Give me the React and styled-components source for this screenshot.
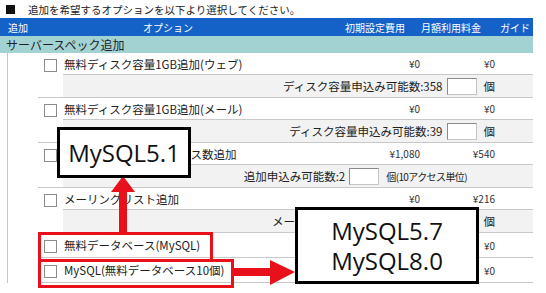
import React from 'react';
import styled, { createGlobalStyle } from 'styled-components';

const GlobalStyle = createGlobalStyle`
    body {
        margin: 0;
        background: #fff;
    }
`;

const jp = `"Noto Sans CJK JP", "Noto Sans", sans-serif`;

const Page = styled.div`
    position: relative;
    width: 546px;
    height: 293px;
    overflow: hidden;
    background: #fff;
    color: #222;
    font-family: ${ jp };
`;

const Title = styled.div`
    height: 18px;
    display: flex;
    align-items: center;
    padding-left: 6px;
    font-size: 10.5px;
    white-space: nowrap;
`;

const Square = styled.span`
    width: 9px;
    height: 9px;
    background: #111;
    margin-right: 13px;
`;

const Table = styled.div`
    width: 533px;
`;

const HeadRow = styled.div`
    display: grid;
    grid-template-columns: 143px 202px 76px 79px 1fr;
    height: 18px;
    align-items: center;
    background: #1462c8;
    color: #fff;
    font-size: 10px;
    white-space: nowrap;
    overflow: hidden;
`;

const HeadCell = styled.span`
    padding-left: ${ p => p.$pad || 0 }px;
    overflow: hidden;
`;

const Section = styled.div`
    height: 17px;
    display: flex;
    align-items: center;
    padding-left: 6px;
    background: #a2d2d2;
    font-size: 12px;
`;

const Body = styled.div`
    margin-left: 7px;
    border-left: 1px solid #c6c6c6;
    padding-left: 30px;
`;

const Block = styled.div`
    border-bottom: 1px solid #c8c8c8;
`;

const MainRow = styled.div`
    display: grid;
    grid-template-columns: 25px 1fr 60px 75px 38px;
    align-items: center;
    height: ${ p => p.$h }px;
    white-space: nowrap;
`;

const Check = styled.span`
    justify-self: center;
    width: 11px;
    height: 11px;
    margin-top: 3px;
    border: 1px solid #8c8c8c;
    background: #fff;
`;

const Name = styled.span`
    font-size: 11.5px;
    padding-left: 1px;
`;

const Fee = styled.span`
    text-align: right;
    font-size: 10px;
    color: #333;
`;

const SubRow = styled.div`
    margin-left: 25px;
    height: 22px;
    display: flex;
    align-items: center;
    justify-content: flex-end;
    padding-right: ${ p => p.$pad }px;
    border-top: 1px solid #c8c8c8;
    background: #f2f2f2;
    font-size: 11.5px;
    white-space: nowrap;
`;

const Field = styled.span`
    width: 28px;
    height: 15px;
    margin: 0 7px 0 4px;
    background: #fff;
    border: 1px solid #c4c4c4;
    border-top-color: #8a8a8a;
    border-left-color: #8a8a8a;
`;

const Unit = styled.span`
    font-size: ${ p => p.$small ? '10px' : 'inherit' };
    letter-spacing: ${ p => p.$small ? '-0.6px' : 'normal' };
`;

const Highlight = styled.div`
    position: absolute;
    left: ${ p => p.$x }px;
    top: ${ p => p.$y }px;
    width: ${ p => p.$w }px;
    height: ${ p => p.$h }px;
    box-sizing: border-box;
    border: 3px solid #e8101a;
`;

const Callout = styled.div`
    position: absolute;
    left: ${ p => p.$x }px;
    top: ${ p => p.$y }px;
    width: ${ p => p.$w }px;
    height: ${ p => p.$h }px;
    box-sizing: border-box;
    border: 3px solid #000;
    background: #fff;
    display: flex;
    flex-direction: column;
    align-items: center;
    justify-content: center;
    font-family: "Open Sans", "Noto Sans", sans-serif;
    font-size: 24px;
    line-height: 30px;
    color: #111;
`;

const Arrows = styled.svg`
    position: absolute;
    left: 0;
    top: 0;
    pointer-events: none;
`;

const options = [
    { name: '無料ディスク容量1GB追加(ウェブ)', fee: '¥0', monthly: '¥0', label: 'ディスク容量申込み可能数:358', unit: '個', pad: 38 },
    { name: '無料ディスク容量1GB追加(メール)', fee: '¥0', monthly: '¥0', label: 'ディスク容量申込み可能数:39', unit: '個', pad: 38 },
    { name: 'Webサーバー同時アクセス数追加', fee: '¥1,080', monthly: '¥540', label: '追加申込み可能数:2', unit: '個(10アクセス単位)', pad: 66, small: true },
    { name: 'メーリングリスト追加', fee: '¥0', monthly: '¥216', label: 'メーリングリスト申込み可能数:5', unit: '個', pad: 38 },
    { name: '無料データベース(MySQL)', fee: '¥0', monthly: '¥0' },
    { name: 'MySQL(無料データベース10個)', fee: '¥0', monthly: '¥0' },
];

const Option = ( { name, fee, monthly, label, unit, pad, small } ) =>
    <Block>
        <MainRow $h={ label ? 21 : 24 }>
            <Check />
            <Name>{ name }</Name>
            <Fee>{ fee }</Fee>
            <Fee>{ monthly }</Fee>
        </MainRow>
        { label &&
            <SubRow $pad={ pad }>
                { label }
                <Field />
                <Unit $small={ small }>{ unit }</Unit>
            </SubRow> }
    </Block>;

const App = () =>
    <Page>
        <GlobalStyle />
        <Title>
            <Square />
            追加を希望するオプションを以下より選択してください。
        </Title>
        <Table>
            <HeadRow>
                <HeadCell $pad={ 8 }>追加</HeadCell>
                <HeadCell>オプション</HeadCell>
                <HeadCell>初期設定費用</HeadCell>
                <HeadCell>月額利用料金</HeadCell>
                <HeadCell>ガイド</HeadCell>
            </HeadRow>
            <Section>サーバースペック追加</Section>
            <Body>
                { options.map( o => <Option key={ o.name } { ...o } /> ) }
            </Body>
        </Table>

        <Highlight $x={ 38 } $y={ 232 } $w={ 175 } $h={ 30 } />
        <Highlight $x={ 38 } $y={ 259 } $w={ 196 } $h={ 29 } />

        <Arrows width="546" height="293" viewBox="0 0 546 293">
            <rect x="119" y="190" width="8" height="43" fill="#e8101a" />
            <polygon points="111,192 135,192 123,176" fill="#e8101a" />
            <rect x="233" y="268" width="40" height="8" fill="#e8101a" />
            <polygon points="270,260 270,285 295,272" fill="#e8101a" />
        </Arrows>

        <Callout $x={ 57 } $y={ 127 } $w={ 134 } $h={ 51 }>MySQL5.1</Callout>
        <Callout $x={ 295 } $y={ 207 } $w={ 184 } $h={ 77 }>
            <span>MySQL5.7</span>
            <span>MySQL8.0</span>
        </Callout>
    </Page>;

export default App;
